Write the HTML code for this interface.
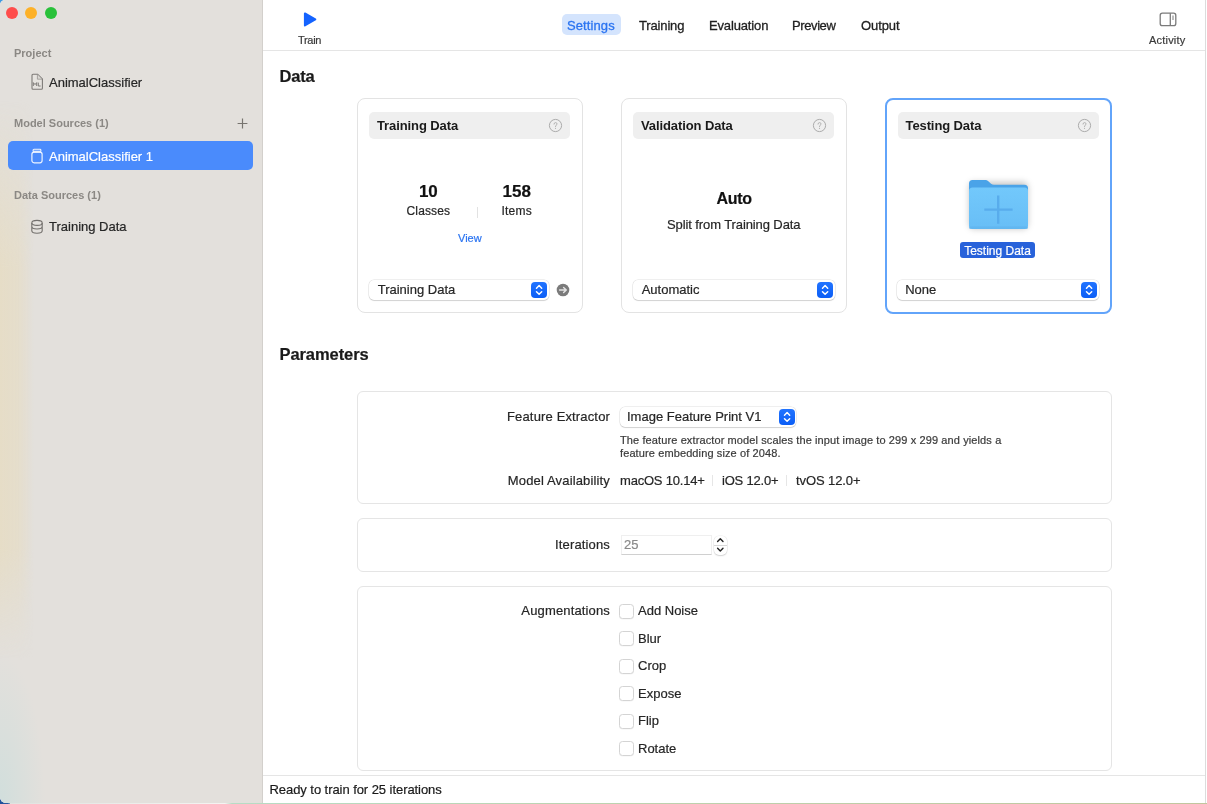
<!DOCTYPE html>
<html><head><meta charset="utf-8">
<style>
html,body{margin:0;padding:0;width:1207px;height:804px;overflow:hidden;background:#fff;}
body{font-family:"Liberation Sans",sans-serif;position:relative;}
.a{position:absolute;}
.t{position:absolute;white-space:nowrap;line-height:1;-webkit-text-stroke:0.2px currentColor;}
.desk{position:absolute;left:0;top:0;width:1207px;height:804px;background:#fff;}
.bot{position:absolute;left:0;top:803px;width:1207px;height:1px;background:linear-gradient(90deg,#1e4f9a 0px,#dfe3e0 8px,#f4f4f2 225px,#b7dcc5 232px,#bcd3b0 600px,#c1c69e 1207px);}
.win{position:absolute;left:0;top:0;width:1207px;height:803px;background:#fff;overflow:hidden;border-radius:5px 0 0 6px;will-change:transform;}
.side{position:absolute;left:0;top:0;width:262px;height:803px;background:#e3e0dc;}
.sline{position:absolute;left:262px;top:0;width:1px;height:803px;background:#d3d0cc;}
.hdr{font-size:11px;font-weight:700;color:#8b8884;-webkit-text-stroke:0;}
.itm{font-size:13px;color:#262626;}
.card{position:absolute;top:98px;width:224px;height:213px;border:1px solid #e3e3e3;border-radius:8px;}
.chead{position:absolute;left:11px;top:13px;width:201px;height:27px;background:#efefef;border-radius:5px;}
.chead span{position:absolute;left:8px;top:7.2px;font-size:13px;font-weight:700;color:#1a1a1a;line-height:1;white-space:nowrap;letter-spacing:-0.1px;}
.help{position:absolute;top:5.5px;}
.pop{position:absolute;height:20px;background:#fff;border-radius:5px;box-shadow:0 0 0 0.5px rgba(0,0,0,0.13),0 1px 1px rgba(0,0,0,0.12);}
.pop span{position:absolute;left:8.7px;top:3px;font-size:13px;color:#262626;line-height:1;white-space:nowrap;-webkit-text-stroke:0.2px currentColor;}
.step{position:absolute;width:16px;height:16px;border-radius:4px;background:linear-gradient(#2274ff,#0b5ef6);}
.step svg{position:absolute;left:0;top:0;}
.box{position:absolute;left:357px;width:753px;border:1px solid #e5e5e5;border-radius:6px;}
.lbl{font-size:13px;color:#262626;text-align:right;width:300px;letter-spacing:0.15px;}
.cb{position:absolute;left:619px;width:13px;height:13px;border:0.8px solid #d4d4d4;border-radius:3.5px;background:#fff;box-shadow:0 0.5px 0.5px rgba(0,0,0,0.05);}
.tab{position:absolute;top:19px;font-size:13px;color:#1f1f1f;white-space:nowrap;line-height:1;-webkit-text-stroke:0.3px currentColor;}
</style></head><body>
<div class="desk"></div>
<div class="bot"></div>
<div class="a" style="left:0;top:0;width:8px;height:8px;background:linear-gradient(135deg,#3d97e0 0%,#4aa0e0 45%,rgba(220,225,225,0) 75%);"></div>
<div class="a" style="left:0;top:794px;width:10px;height:10px;background:linear-gradient(45deg,#1e4f9a 0%,#2a5aa0 40%,rgba(200,215,210,0) 65%);"></div>
<div class="win">
  <!-- sidebar -->
  <div class="side">
    <div class="a" style="left:0;top:100px;width:34px;height:560px;background:linear-gradient(90deg,rgba(230,220,195,0.85) 0,rgba(230,220,195,0.65) 55%,rgba(230,220,195,0) 100%);-webkit-mask-image:linear-gradient(180deg,transparent 0,#000 30%,#000 80%,transparent 100%);"></div>
    <div class="a" style="left:0;top:650px;width:50px;height:153px;background:radial-gradient(ellipse 45px 150px at 0 100%,rgba(208,222,220,0.95),rgba(208,222,220,0) 100%);"></div>
    <div class="a" style="left:6px;top:7px;width:12px;height:12px;border-radius:50%;background:#fe4d4b;"></div>
    <div class="a" style="left:25px;top:7px;width:12px;height:12px;border-radius:50%;background:#fdb127;"></div>
    <div class="a" style="left:45px;top:7px;width:12px;height:12px;border-radius:50%;background:#29c13a;"></div>

    <div class="t hdr" style="left:14px;top:47.5px;">Project</div>
    <svg class="a" style="left:30px;top:73px" width="14" height="18" viewBox="0 0 14 18">
      <path d="M3 1.2 H7.6 L12.4 6 V15.2 Q12.4 16.2 11.4 16.2 H3 Q2 16.2 2 15.2 V2.2 Q2 1.2 3 1.2 Z" fill="#e6e3df" stroke="#7d7a77" stroke-width="1.1"/>
      <path d="M7.4 1.4 V6.2 H12.2" fill="#d9d6d2" stroke="#8e8b88" stroke-width="0.7"/>
      <path d="M3.3 13 V9.6 L5 11.6 L6.7 9.6 V13 M8.3 9.6 V13 H10.6" fill="none" stroke="#7d7a77" stroke-width="1"/>
    </svg>
    <div class="t itm" style="left:49px;top:76px;">AnimalClassifier</div>

    <div class="t hdr" style="left:14px;top:118px;">Model Sources (1)</div>
    <svg class="a" style="left:237px;top:118px" width="11" height="11" viewBox="0 0 11 11">
      <path d="M5.5 0.6 V10.4 M0.6 5.5 H10.4" stroke="#77746f" stroke-width="1.2"/>
    </svg>
    <div class="a" style="left:8px;top:141px;width:245px;height:29px;border-radius:5px;background:#4a8bfc;"></div>
    <svg class="a" style="left:30px;top:147.5px" width="14" height="16" viewBox="0 0 14 16">
      <rect x="3.1" y="1.3" width="7.8" height="2.6" rx="0.9" fill="rgba(255,255,255,0.25)" stroke="rgba(255,255,255,0.85)" stroke-width="1.1"/>
      <rect x="1.9" y="4.1" width="10.2" height="10.7" rx="2.2" fill="none" stroke="rgba(255,255,255,0.9)" stroke-width="1.2"/>
    </svg>
    <div class="t itm" style="left:49px;top:149.5px;color:#fff;">AnimalClassifier 1</div>

    <div class="t hdr" style="left:14px;top:190px;">Data Sources (1)</div>
    <svg class="a" style="left:30px;top:218.5px" width="14" height="16" viewBox="0 0 14 16">
      <ellipse cx="7" cy="3.9" rx="5.2" ry="2.5" fill="none" stroke="#73706d" stroke-width="1.1"/>
      <path d="M1.8 3.9 V11.8 Q1.8 14.3 7 14.3 Q12.2 14.3 12.2 11.8 V3.9 M1.8 7.6 Q1.8 10 7 10 Q12.2 10 12.2 7.6" fill="none" stroke="#73706d" stroke-width="1.1"/>
    </svg>
    <div class="t itm" style="left:49px;top:220px;">Training Data</div>
  </div>
  <div class="sline"></div>

  <!-- toolbar -->
  <div class="a" style="left:263px;top:50px;width:943px;height:1px;background:#e5e5e5;"></div>
  <svg class="a" style="left:302px;top:11px" width="17" height="17" viewBox="0 0 17 17">
    <path d="M2.9 2.4 L13.3 8.4 L2.9 14.4 Z" fill="#1463ff" stroke="#1463ff" stroke-width="2" stroke-linejoin="round"/>
  </svg>
  <div class="t" style="left:298px;top:35px;font-size:11px;color:#3a3a3a;letter-spacing:-0.3px;">Train</div>

  <div class="a" style="left:562px;top:14px;width:59px;height:21px;border-radius:5px;background:#d4e4fd;"></div>
  <div class="tab" style="left:567px;color:#2b74f1;letter-spacing:0.1px;">Settings</div>
  <div class="tab" style="left:639px;letter-spacing:-0.15px;">Training</div>
  <div class="tab" style="left:709px;letter-spacing:-0.15px;">Evaluation</div>
  <div class="tab" style="left:792px;letter-spacing:-0.4px;">Preview</div>
  <div class="tab" style="left:861px;letter-spacing:-0.1px;">Output</div>

  <svg class="a" style="left:1159px;top:12px" width="18" height="15" viewBox="0 0 18 15">
    <rect x="1.2" y="1.2" width="15.6" height="12.4" rx="2.2" fill="none" stroke="#7b7b7b" stroke-width="1.3"/>
    <path d="M11.3 1.2 V13.6" stroke="#7b7b7b" stroke-width="1.3"/>
    <rect x="13" y="3.5" width="2" height="4.5" fill="#bdbdbd"/>
  </svg>
  <div class="t" style="left:1149px;top:35px;font-size:11px;color:#3a3a3a;letter-spacing:0.2px;">Activity</div>

  <!-- right edge -->
  <div class="a" style="left:1205px;top:0;width:1px;height:803px;background:#dcdcdc;"></div>

  <!-- Data -->
  <div class="t" style="left:279.5px;top:68px;font-size:16.5px;font-weight:700;color:#1a1a1a;letter-spacing:-0.2px;">Data</div>

  <div class="card" style="left:357px;">
    <div class="chead"><span>Training Data</span>
      <svg class="help" style="left:179px;" width="15" height="15" viewBox="0 0 15 15"><circle cx="7.5" cy="7.5" r="6.1" fill="none" stroke="#ababab" stroke-width="1"/><path d="M6 6.1 Q6 4.6 7.5 4.6 Q9 4.6 9 5.9 Q9 6.8 8.1 7.3 Q7.5 7.7 7.5 8.6" fill="none" stroke="#a3a3a3" stroke-width="0.8" stroke-linecap="round"/><circle cx="7.5" cy="10.2" r="0.55" fill="#a3a3a3"/></svg></div>
    <div class="t" style="left:61px;top:83.5px;font-size:17px;font-weight:700;color:#111;letter-spacing:-0.3px;">10</div>
    <div class="t" style="left:144.5px;top:83.5px;font-size:17px;font-weight:700;color:#111;">158</div>
    <div class="t" style="left:48.5px;top:106px;font-size:12px;color:#262626;letter-spacing:0.15px;">Classes</div>
    <div class="t" style="left:143.5px;top:106px;font-size:12px;color:#262626;letter-spacing:0.2px;">Items</div>
    <div class="a" style="left:119px;top:108px;width:1px;height:11px;background:#e2e2e2;"></div>
    <div class="t" style="left:100px;top:134px;font-size:11px;color:#2b74f1;">View</div>
    <div class="pop" style="left:11px;top:181px;width:180px;"><span>Training Data</span><div class="step" style="left:162px;top:2px;"><svg width="16" height="16" viewBox="0 0 16 16"><path d="M5.5 6.2 L8.1 3.6 L10.7 6.2 M5.5 9.7 L8.1 12.3 L10.7 9.7" fill="none" stroke="#fff" stroke-width="1.45" stroke-linecap="round" stroke-linejoin="round"/></svg></div></div>
    <svg class="a" style="left:197.5px;top:184px" width="14" height="14" viewBox="0 0 14 14"><circle cx="7" cy="7" r="6.3" fill="#7b7b7b"/><path d="M3.6 7 H10.2 M7.6 4.4 L10.3 7 L7.6 9.6" fill="none" stroke="#e4e4e4" stroke-width="1.4" stroke-linecap="round" stroke-linejoin="round"/></svg>
  </div>

  <div class="card" style="left:621px;">
    <div class="chead"><span>Validation Data</span>
      <svg class="help" style="left:179px;" width="15" height="15" viewBox="0 0 15 15"><circle cx="7.5" cy="7.5" r="6.1" fill="none" stroke="#ababab" stroke-width="1"/><path d="M6 6.1 Q6 4.6 7.5 4.6 Q9 4.6 9 5.9 Q9 6.8 8.1 7.3 Q7.5 7.7 7.5 8.6" fill="none" stroke="#a3a3a3" stroke-width="0.8" stroke-linecap="round"/><circle cx="7.5" cy="10.2" r="0.55" fill="#a3a3a3"/></svg></div>
    <div class="t" style="left:94.5px;top:91.7px;font-size:16px;font-weight:700;color:#111;letter-spacing:-0.3px;">Auto</div>
    <div class="t" style="left:45px;top:119px;font-size:13px;color:#262626;letter-spacing:-0.1px;">Split from Training Data</div>
    <div class="pop" style="left:11px;top:181px;width:202px;"><span>Automatic</span><div class="step" style="left:184px;top:2px;"><svg width="16" height="16" viewBox="0 0 16 16"><path d="M5.5 6.2 L8.1 3.6 L10.7 6.2 M5.5 9.7 L8.1 12.3 L10.7 9.7" fill="none" stroke="#fff" stroke-width="1.45" stroke-linecap="round" stroke-linejoin="round"/></svg></div></div>
  </div>

  <div class="card" style="left:885px;border:2px solid #62a4fa;top:97.5px;width:223px;height:212px;">
    <div class="chead" style="left:10.5px;top:12.5px;"><span>Testing Data</span>
      <svg class="help" style="left:179px;" width="15" height="15" viewBox="0 0 15 15"><circle cx="7.5" cy="7.5" r="6.1" fill="none" stroke="#ababab" stroke-width="1"/><path d="M6 6.1 Q6 4.6 7.5 4.6 Q9 4.6 9 5.9 Q9 6.8 8.1 7.3 Q7.5 7.7 7.5 8.6" fill="none" stroke="#a3a3a3" stroke-width="0.8" stroke-linecap="round"/><circle cx="7.5" cy="10.2" r="0.55" fill="#a3a3a3"/></svg></div>
    <svg class="a" style="left:79px;top:77.3px;overflow:visible" width="65" height="57" viewBox="0 0 65 57">
      <defs><linearGradient id="fb" x1="0" y1="0" x2="0" y2="1"><stop offset="0" stop-color="#72c8fb"/><stop offset="1" stop-color="#68bef6"/></linearGradient>
      <filter id="fs" x="-50%" y="-50%" width="200%" height="200%"><feGaussianBlur stdDeviation="3.2"/></filter></defs>
      <rect x="3" y="5" width="59" height="47" rx="5" fill="rgba(0,0,0,0.22)" filter="url(#fs)"/>
      <path d="M3 6.5 Q3 3 6.5 3 H19.5 Q21 3 22.3 4.2 L25 6.8 Q26.3 7.8 28 7.8 H58.5 Q62 7.8 62 11.3 V20 H3 Z" fill="#4aa3e8"/>
      <rect x="3" y="10.5" width="59" height="41.5" rx="3.5" fill="url(#fb)"/>
      <rect x="3" y="49.5" width="59" height="2.5" rx="1.2" fill="#5fb2ec" opacity="0.6"/>
      <path d="M18.3 32.6 H46.6 M32.2 18.4 V46.8" stroke="#58acec" stroke-width="2.4"/>
    </svg>
    <div class="a" style="left:73px;top:142px;width:75px;height:16.5px;border-radius:3px;background:#2862da;"></div>
    <div class="t" style="left:73px;width:75px;text-align:center;top:145px;font-size:12px;color:#fff;">Testing Data</div>
    <div class="pop" style="left:9.5px;top:180.5px;width:202px;"><span>None</span><div class="step" style="left:184px;top:2px;"><svg width="16" height="16" viewBox="0 0 16 16"><path d="M5.5 6.2 L8.1 3.6 L10.7 6.2 M5.5 9.7 L8.1 12.3 L10.7 9.7" fill="none" stroke="#fff" stroke-width="1.45" stroke-linecap="round" stroke-linejoin="round"/></svg></div></div>
  </div>

  <!-- Parameters -->
  <div class="t" style="left:279.5px;top:345.8px;font-size:16.5px;font-weight:700;color:#1a1a1a;letter-spacing:-0.08px;">Parameters</div>

  <div class="box" style="top:391px;height:111px;"></div>
  <div class="t lbl" style="left:310px;top:410px;">Feature Extractor</div>
  <div class="pop" style="left:620px;top:407px;width:176px;"><span style="left:7px;top:3px;">Image Feature Print V1</span><div class="step" style="left:158.5px;top:2px;"><svg width="16" height="16" viewBox="0 0 16 16"><path d="M5.5 6.2 L8.1 3.6 L10.7 6.2 M5.5 9.7 L8.1 12.3 L10.7 9.7" fill="none" stroke="#fff" stroke-width="1.45" stroke-linecap="round" stroke-linejoin="round"/></svg></div></div>
  <div class="t" style="left:620px;top:435px;font-size:11px;color:#3a3a3a;letter-spacing:0.11px;">The feature extractor model scales the input image to 299 x 299 and yields a</div>
  <div class="t" style="left:620px;top:448px;font-size:11px;color:#3a3a3a;letter-spacing:0.11px;">feature embedding size of 2048.</div>
  <div class="t lbl" style="left:310px;top:474px;">Model Availability</div>
  <div class="t" style="left:620px;top:474px;font-size:13px;color:#262626;letter-spacing:-0.2px;">macOS 10.14+</div>
  <div class="a" style="left:712px;top:475px;width:1px;height:11px;background:#e6e6e6;"></div>
  <div class="t" style="left:722px;top:474px;font-size:13px;color:#262626;letter-spacing:-0.2px;">iOS 12.0+</div>
  <div class="a" style="left:786px;top:475px;width:1px;height:11px;background:#e6e6e6;"></div>
  <div class="t" style="left:796px;top:474px;font-size:13px;color:#262626;letter-spacing:-0.1px;">tvOS 12.0+</div>

  <div class="box" style="top:518px;height:52px;"></div>
  <div class="t lbl" style="left:310px;top:538px;">Iterations</div>
  <div class="a" style="left:620.5px;top:535px;width:91px;height:19.5px;border:0.5px solid #efefef;border-bottom:1px solid #d0d0d0;box-sizing:border-box;"></div>
  <div class="t" style="left:624px;top:538px;font-size:13px;color:#8a8a8a;">25</div>
  <div class="a" style="left:713.5px;top:535.5px;width:13px;height:19.5px;border-radius:5px;background:#fff;box-shadow:0 0 0 0.5px rgba(0,0,0,0.08),0 1px 1.5px rgba(0,0,0,0.14);"></div>
  <div class="a" style="left:713.5px;top:544.5px;width:13px;height:0.8px;background:#d8d8d8;"></div>
  <svg class="a" style="left:713px;top:535px" width="14" height="20" viewBox="0 0 14 20">
    <path d="M4.6 6.6 L7.3 3.7 L10 6.6 M4.6 13.2 L7.3 16.1 L10 13.2" fill="none" stroke="#262626" stroke-width="1.4" stroke-linecap="round" stroke-linejoin="round"/>
  </svg>

  <div class="box" style="top:586px;height:183px;"></div>
  <div class="t lbl" style="left:310px;top:604px;">Augmentations</div>
  <div class="cb" style="top:603.5px;"></div><div class="t itm" style="left:638px;top:604px;">Add Noise</div>
  <div class="cb" style="top:631px;"></div><div class="t itm" style="left:638px;top:631.5px;">Blur</div>
  <div class="cb" style="top:658.5px;"></div><div class="t itm" style="left:638px;top:659px;">Crop</div>
  <div class="cb" style="top:686px;"></div><div class="t itm" style="left:638px;top:686.5px;">Expose</div>
  <div class="cb" style="top:713.5px;"></div><div class="t itm" style="left:638px;top:714px;">Flip</div>
  <div class="cb" style="top:741px;"></div><div class="t itm" style="left:638px;top:741.5px;">Rotate</div>

  <!-- status -->
  <div class="a" style="left:263px;top:775px;width:942px;height:1px;background:#e5e5e5;"></div>
  <div class="t itm" style="left:269.5px;top:783px;color:#1a1a1a;letter-spacing:-0.06px;">Ready to train for 25 iterations</div>
</div>
</body></html>
